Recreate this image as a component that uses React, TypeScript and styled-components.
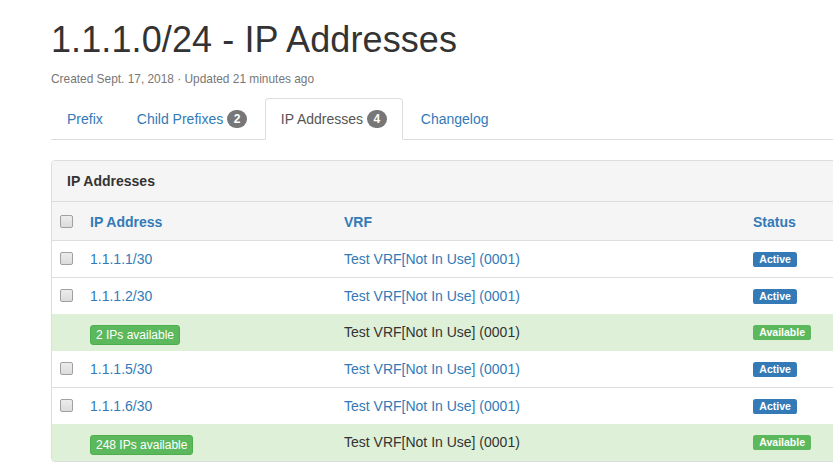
import React from 'react'
import styled, { createGlobalStyle } from 'styled-components';

type Row = {
  ip?: string;
  available?: string;
  vrf: string;
  status: 'Active' | 'Available';
};

const rows: Row[] = [
  { ip: '1.1.1.1/30', vrf: 'Test VRF[Not In Use] (0001)', status: 'Active' },
  { ip: '1.1.1.2/30', vrf: 'Test VRF[Not In Use] (0001)', status: 'Active' },
  { available: '2 IPs available', vrf: 'Test VRF[Not In Use] (0001)', status: 'Available' },
  { ip: '1.1.1.5/30', vrf: 'Test VRF[Not In Use] (0001)', status: 'Active' },
  { ip: '1.1.1.6/30', vrf: 'Test VRF[Not In Use] (0001)', status: 'Active' },
  { available: '248 IPs available', vrf: 'Test VRF[Not In Use] (0001)', status: 'Available' },
];

const tabs = [
  { name: 'Prefix' },
  { name: 'Child Prefixes', count: 2 },
  { name: 'IP Addresses', count: 4, active: true },
  { name: 'Changelog' },
];

const App = () => {
  return (
    <>
      <GlobalStyle />
      <Page>
        <Title>1.1.1.0/24 - IP Addresses</Title>
        <Meta>Created Sept. 17, 2018 · Updated 21 minutes ago</Meta>
        <Tabs>
          {tabs.map((tab) => (
            <Tab key={tab.name} $active={!!tab.active}>
              {tab.name}
              {tab.count !== undefined && <Badge>{tab.count}</Badge>}
            </Tab>
          ))}
        </Tabs>
        <Panel>
          <PanelHeading>IP Addresses</PanelHeading>
          <Table>
            <colgroup>
              <col style={{ width: 30 }} />
              <col style={{ width: 254 }} />
              <col style={{ width: 409 }} />
              <col />
            </colgroup>
            <thead>
              <tr>
                <Th><Check /></Th>
                <Th>IP Address</Th>
                <Th>VRF</Th>
                <Th>Status</Th>
              </tr>
            </thead>
            <tbody>
              {rows.map((row, i) => {
                const tall = !!row.available;
                return (
                  <Tr key={i} $success={tall}>
                    <Td><Cell $tall={tall}>{row.ip && <Check />}</Cell></Td>
                    <Td>
                      <Cell $tall={tall}>
                        {row.ip ? <Link>{row.ip}</Link> : <AvailableButton>{row.available}</AvailableButton>}
                      </Cell>
                    </Td>
                    <Td><Cell $tall={tall}>{row.ip ? <Link>{row.vrf}</Link> : row.vrf}</Cell></Td>
                    <Td>
                      <Cell $tall={tall}>
                        <Label $kind={row.status}>{row.status}</Label>
                      </Cell>
                    </Td>
                  </Tr>
                );
              })}
            </tbody>
          </Table>
        </Panel>
      </Page>
    </>
  )
}

const GlobalStyle = createGlobalStyle`
  html, body {
    margin: 0;
    padding: 0;
    background: #fff;
    overflow: hidden;
  }
  body {
    font-family: "Liberation Sans", Arial, Helvetica, sans-serif;
    font-size: 14px;
    line-height: 20px;
    color: #333;
  }
`;

const Page = styled.div`
  padding: 0 0 0 51px;
  width: 1200px;
`;

const Title = styled.h1`
  margin: 20px 0 10px;
  font-size: 36px;
  font-weight: 500;
  line-height: 1.1;
  letter-spacing: 0.1px;
  color: #333;
`;

const Meta = styled.p`
  margin: 0 0 10px;
  font-size: 11.9px;
  line-height: 18px;
  color: #777;
`;

const Tabs = styled.ul`
  display: flex;
  list-style: none;
  margin: 0;
  padding: 0;
  border-bottom: 1px solid #ddd;
`;

const Tab = styled.li<{ $active: boolean }>`
  margin: 0 2px -1px 0;
  padding: 10px 15px;
  line-height: 20px;
  border: 1px solid ${(p) => (p.$active ? '#ddd' : 'transparent')};
  border-bottom-color: ${(p) => (p.$active ? '#fff' : 'transparent')};
  border-radius: 4px 4px 0 0;
  background: ${(p) => (p.$active ? '#fff' : 'transparent')};
  color: ${(p) => (p.$active ? '#555' : '#337ab7')};
  display: flex;
  align-items: center;
`;

const Badge = styled.span`
  display: inline-block;
  margin-left: 4px;
  padding: 3px 6.5px;
  font-size: 12px;
  font-weight: bold;
  line-height: 1;
  color: #fff;
  text-align: center;
  background: #777;
  border-radius: 10px;
`;

const Panel = styled.div`
  margin-top: 20px;
  border: 1px solid #ddd;
  border-radius: 4px;
  box-shadow: 0 1px 1px rgba(0, 0, 0, 0.05);
  overflow: hidden;
`;

const PanelHeading = styled.div`
  padding: 10px 15px;
  background: #f5f5f5;
  border-bottom: 1px solid #ddd;
  font-weight: bold;
  color: #333;
`;

const Table = styled.table`
  width: 100%;
  border-collapse: separate;
  border-spacing: 0;
  table-layout: fixed;
`;

const Th = styled.th`
  padding: 10px 8px 8px;
  text-align: left;
  vertical-align: top;
  background: #f5f5f5;
  border-bottom: 1px solid #ddd;
  color: #337ab7;
  font-weight: bold;
  line-height: 20px;
`;

const Tr = styled.tr<{ $success: boolean }>`
  background: ${(p) => (p.$success ? '#dff0d8' : '#fff')};
  & + & td {
    border-top: 1px solid #ddd;
  }
`;

const Td = styled.td`
  padding: 8px;
  vertical-align: top;
`;

const Cell = styled.div<{ $tall: boolean }>`
  height: ${(p) => (p.$tall ? '21px' : '20px')};
  line-height: 20px;
  white-space: nowrap;
`;

const Check = styled.span`
  display: inline-block;
  width: 11px;
  height: 11px;
  margin-top: 3px;
  vertical-align: top;
  border: 1px solid #a0a0a0;
  border-radius: 2px;
  background: linear-gradient(#ececec, #dcdcdc);
`;

const Link = styled.span`
  color: #337ab7;
`;

const AvailableButton = styled.span`
  display: inline-block;
  vertical-align: top;
  margin: 3px 0 -3px;
  padding: 1px 5px;
  font-size: 12px;
  line-height: 16px;
  color: #fff;
  background: #5cb85c;
  border: 1px solid #4cae4c;
  border-radius: 3px;
`;

const Label = styled.span<{ $kind: 'Active' | 'Available' }>`
  display: inline-block;
  margin-top: 3px;
  vertical-align: top;
  padding: 0.2em 0.6em 0.3em;
  font-size: 10.5px;
  font-weight: bold;
  line-height: 1;
  color: #fff;
  border-radius: 0.25em;
  background: ${(p) => (p.$kind === 'Active' ? '#337ab7' : '#5cb85c')};
`;

export default App
